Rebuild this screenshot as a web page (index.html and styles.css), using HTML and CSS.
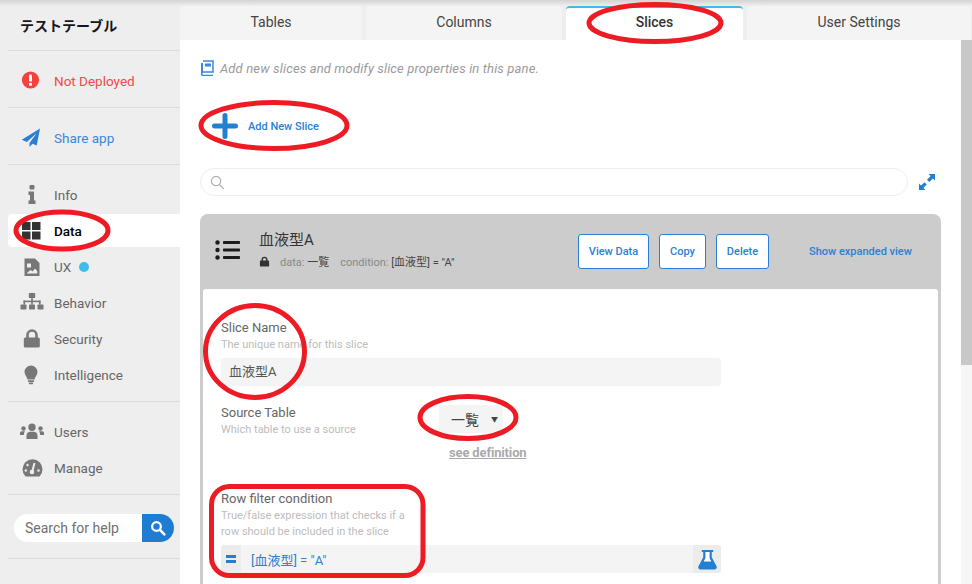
FILE: index.html
```html
<!DOCTYPE html>
<html lang="ja">
<head>
<meta charset="utf-8">
<title>テストテーブル</title>
<link rel="stylesheet" href="styles.css">
</head>
<body>
<div class="app">
  <aside class="sidebar">
    <div class="brand">テストテーブル</div>
    <div class="section section-single">
      <a class="nav-row danger"><span class="nav-icon"><svg viewBox="0 0 24 24"><circle cx="10.5" cy="11" r="8.6" fill="#f4403f"/><rect x="9" y="5.500" width="3" height="7" rx="1" fill="#fff"/><rect x="9" y="13.700" width="3" height="3" rx="1" fill="#fff"/></svg></span>Not Deployed</a>
    </div>
    <div class="section section-single">
      <a class="nav-row share"><span class="nav-icon"><svg viewBox="0 0 24 24"><path d="M20 2.500 1.800 13.800l5 2.100L16.600 7.300 9.500 17v4l3-3.300 4.200 1.700z" fill="#2a7fd3"/></svg></span>Share app</a>
    </div>
    <div class="section section-nav">
      <a class="nav-row"><span class="nav-icon"><svg viewBox="0 0 24 24" fill="#777"><rect x="9.500" y="2" width="5" height="4.500" rx="1"/><path d="M8.500 8.500h5.500v9h1.500V21h-7v-3.500H10v-5.500H8.500z"/></svg></span>Info</a>
      <a class="nav-row active"><span class="nav-icon"><svg viewBox="0 0 24 24" fill="#333"><rect x="2" y="3" width="8.500" height="8"/><rect x="12" y="3" width="8.500" height="8"/><rect x="2" y="12.500" width="8.500" height="8"/><rect x="12" y="12.500" width="8.500" height="8"/></svg></span>Data</a>
      <a class="nav-row"><span class="nav-icon"><svg viewBox="0 0 24 24"><path d="M4.500 3.500H15l4.500 4.500v13H4.500z" fill="#777"/><path d="M7 8.500h4v4H7zM7 18l3.500-3 2 1.500 2.500-3 2.200 2.500V18.500H7z" fill="#eee"/></svg></span>UX<span class="dot"></span></a>
      <a class="nav-row"><span class="nav-icon"><svg viewBox="0 0 24 24" fill="#777"><rect x="8.800" y="2" width="6.400" height="5" rx=".8"/><rect x="11.200" y="7" width="1.600" height="3.500"/><rect x="3.500" y="9.600" width="17" height="1.600"/><rect x="3.500" y="9.600" width="1.600" height="4"/><rect x="19" y="9.600" width="1.600" height="4"/><rect x="11.200" y="9.600" width="1.600" height="4"/><rect x="0.500" y="13.500" width="6" height="5" rx=".8"/><rect x="9" y="13.500" width="6" height="5" rx=".8"/><rect x="17.500" y="13.500" width="6" height="5" rx=".8"/></svg></span>Behavior</a>
      <a class="nav-row"><span class="nav-icon"><svg viewBox="0 0 24 24"><path d="M7.500 11V8a4.500 4.500 0 0 1 9 0v3" fill="none" stroke="#777" stroke-width="2.600"/><rect x="3.800" y="10.500" width="16" height="10" rx="1.500" fill="#777"/></svg></span>Security</a>
      <a class="nav-row"><span class="nav-icon"><svg viewBox="0 0 24 24" fill="#777"><path d="M11 2.500a6.500 6.500 0 0 1 6.500 6.500c0 3-2.500 4.500-3 7.500h-7c-.5-3-3-4.500-3-7.500A6.500 6.500 0 0 1 11 2.500z"/><rect x="7.800" y="17.300" width="6.400" height="1.800" rx=".8"/><rect x="8.800" y="19.500" width="4.400" height="1.800" rx=".8"/></svg></span>Intelligence</a>
    </div>
    <div class="section section-users">
      <a class="nav-row"><span class="nav-icon"><svg viewBox="0 0 24 24" fill="#777"><circle cx="12" cy="7.300" r="3.700"/><path d="M6.500 19v-3.500c0-2 1.800-3.700 3.500-3.700h4c1.700 0 3.500 1.700 3.500 3.700V19z"/><circle cx="3.500" cy="8.500" r="2.200"/><circle cx="20.500" cy="8.500" r="2.200"/><path d="M0 15v-2c0-1 .8-1.800 1.800-1.800h3.200c-.8 1-1.200 2.300-1.200 3.800zM24 15v-2c0-1-.8-1.800-1.800-1.800H19c.8 1 1.200 2.300 1.200 3.800z"/></svg></span>Users</a>
      <a class="nav-row"><span class="nav-icon"><svg viewBox="0 0 24 24"><path d="M5.500 20.500a10 10 0 1 1 14 0z" fill="#777"/><path d="m12.500 14.500 2-7.500" stroke="#eee" stroke-width="2"/><circle cx="12" cy="16" r="2.300" fill="#eee"/><circle cx="5.800" cy="14.500" r="1.200" fill="#eee"/><circle cx="7.500" cy="9" r="1.200" fill="#eee"/><circle cx="18.500" cy="14.500" r="1.200" fill="#eee"/></svg></span>Manage</a>
    </div>
    <div class="section section-search">
      <div class="help-search">
        <span class="help-text">Search for help</span>
        <span class="help-button"><svg viewBox="0 0 24 24" width="18" height="18" fill="none" stroke="#fff"><circle cx="10" cy="10" r="5.800" stroke-width="3"/><path d="m14.500 14.500 6 6" stroke-width="3.600" stroke-linecap="round"/></svg></span>
      </div>
    </div>
  </aside>

  <main class="main">
    <nav class="tabs">
      <a class="tab tab-tables">Tables</a>
      <a class="tab tab-columns">Columns</a>
      <a class="tab tab-slices active">Slices</a>
      <a class="tab tab-settings">User Settings</a>
    </nav>
    <div class="content">
      <section class="pane">
        <p class="hint"><svg viewBox="0 0 14 16" width="14" height="16"><path d="M3 1h10v11H3a1.800 1.800 0 0 0 0 3.500h10" fill="none" stroke="#3f87d6" stroke-width="1.500"/><path d="M2 3v10" stroke="#3f87d6" stroke-width="2"/><rect x="5" y="3.500" width="6" height="3" fill="#3f87d6"/></svg><em>Add new slices and modify slice properties in this pane.</em></p>
        <a class="add-slice"><svg viewBox="0 0 26 26" width="26" height="26"><path d="M13 2.500v21M2.500 13h21" stroke="#2280d3" stroke-width="5" stroke-linecap="round"/></svg><span>Add New Slice</span></a>
        <div class="search-row">
          <div class="search-box"><svg viewBox="0 0 16 16" width="15" height="15" fill="none" stroke="#aaa" stroke-width="1.200"><circle cx="6.500" cy="6.500" r="5"/><path d="m10.200 10.200 4.600 4.600"/></svg></div>
          <svg class="expand" viewBox="0 0 16 16" width="16" height="16" fill="#2280d3"><path d="M9.500 0H16v6.500l-2.100-2.100-3.600 3.600-2.300-2.300 3.600-3.600zM6.500 16H0V9.500l2.100 2.100 3.300-3.300 2.300 2.300-3.300 3.300z"/></svg>
        </div>

        <article class="card">
          <header class="card-head">
            <svg class="list-icon" viewBox="0 0 26 20" width="26" height="20" fill="#1c1c1c"><circle cx="2.500" cy="2.500" r="2.200"/><circle cx="2.500" cy="10" r="2.200"/><circle cx="2.500" cy="17.500" r="2.200"/><rect x="8" y="1" width="17" height="3" rx=".8"/><rect x="8" y="8.500" width="17" height="3" rx=".8"/><rect x="8" y="16" width="17" height="3" rx=".8"/></svg>
            <div class="card-title">
              <div class="title-text">血液型A</div>
              <div class="meta">
                <svg viewBox="0 0 12 12" width="11" height="11"><path d="M3.500 5.500V4a2.500 2.500 0 0 1 5 0v1.500" fill="none" stroke="#333" stroke-width="1.500"/><rect x="1" y="5" width="10" height="6.500" rx="1" fill="#333"/></svg>
                <span class="meta-item"><span class="muted">data:</span> 一覧</span>
                <span class="meta-item"><span class="muted">condition:</span> [血液型] = "A"</span>
              </div>
            </div>
            <div class="actions">
              <a class="btn btn-view">View Data</a>
              <a class="btn btn-copy">Copy</a>
              <a class="btn btn-delete">Delete</a>
              <a class="expanded-link">Show expanded view</a>
            </div>
          </header>
          <div class="card-body">
            <div class="field field-name">
              <div class="label">Slice Name</div>
              <div class="help">The unique name for this slice</div>
              <div class="input">血液型A</div>
            </div>
            <div class="field field-source">
              <div class="source-labels">
                <div class="label">Source Table</div>
                <div class="help">Which table to use a source</div>
              </div>
              <div class="source-control">
                <div class="select"><span>一覧</span><span class="caret">▼</span></div>
                <a class="definition">see definition</a>
              </div>
            </div>
            <div class="field field-filter">
              <div class="label">Row filter condition</div>
              <div class="help help-wrap">True/false expression that checks if a row should be included in the slice</div>
              <div class="expr">
                <span class="expr-eq"><svg viewBox="0 0 10 8" width="10" height="8" fill="#2280d3"><rect width="10" height="3"/><rect y="5" width="10" height="3"/></svg></span>
                <span class="expr-text">[血液型] = "A"</span>
                <span class="expr-test"><svg viewBox="0 0 20 22" width="19" height="21"><path d="M4 1h12v2h-1.500v5.500L19.500 18c.8 1.800-.3 3.500-2 3.500h-15c-1.700 0-2.800-1.700-2-3.500L5.500 8.500V3H4z" fill="#2280d3"/><path d="M7.800 3h4.400v6.300L14 13H6l1.800-3.700z" fill="#fff"/></svg></span>
              </div>
            </div>
          </div>
        </article>
      </section>
      <div class="scrollbar"><div class="thumb"></div></div>
    </div>
  </main>
</div>

<div class="top-shade"></div>
<svg class="marks" viewBox="0 0 972 584" width="972" height="584" fill="none" stroke="#ed1c24" stroke-width="5">
  <ellipse cx="655" cy="23" rx="66" ry="18.500"/>
  <ellipse cx="274" cy="125.500" rx="73" ry="23"/>
  <ellipse cx="62" cy="230.500" rx="46" ry="18.500"/>
  <ellipse cx="255" cy="351.500" rx="49.500" ry="46"/>
  <ellipse cx="468" cy="417.500" rx="48" ry="21"/>
  <rect x="211.500" y="486.500" width="211.500" height="89" rx="18"/>
</svg>
</body>
</html>
```
FILE: styles.css
```css
* { box-sizing: border-box; }
html, body { margin: 0; padding: 0; height: 100%; overflow: hidden; }
body { font-family: Roboto, "Noto Sans CJK JP", sans-serif; background: #fff; color: #555; position: relative; }
a { display: block; }

.app { display: flex; width: 972px; height: 584px; }

/* Sidebar */
.sidebar { width: 180px; flex: none; height: 584px; background: #eeeeee; padding-left: 8px; }
.brand { height: 51px; padding: 14px 0 0 12px; border-bottom: 1px solid #dcdcdc; font: 700 14px/22px "Noto Sans CJK JP", sans-serif; color: #161622; }
.section { display: flex; flex-direction: column; border-bottom: 1px solid #dcdcdc; }
.section-single { padding: 12px 0 8px; }
.section-nav { padding: 12px 0 8px; }
.section-users { padding: 12px 0 8px; }
.section-search { padding: 19px 6px 16px; }
.nav-row { display: flex; align-items: center; height: 33px; margin: 1px 0 2px; padding-left: 12px; font-size: 13.5px; color: #666; border-radius: 4px 0 0 4px; }
.nav-row.active { background: #fff; color: #000; font-weight: 500; }
.nav-row.danger { color: #f4484a; }
.nav-row.share { color: #3a87d8; }
.nav-icon { width: 24px; height: 24px; margin-right: 10px; flex: none; }
.nav-icon svg { display: block; width: 24px; height: 24px; }
.dot { width: 10px; height: 10px; margin-left: 8px; border-radius: 50%; background: #3fbcec; }
.help-search { display: flex; height: 28px; width: 160px; border-radius: 14px; background: #fff; overflow: hidden; }
.help-text { flex: 1; padding-left: 11px; font-size: 14px; line-height: 28px; color: #707070; }
.help-button { width: 32px; display: flex; align-items: center; justify-content: center; background: #1f7dd1; }

/* Tabs */
.main { flex: 1; min-width: 0; display: flex; flex-direction: column; }
.tabs { display: flex; height: 40px; padding-top: 6px; background: #eeeeee; }
.tab { height: 34px; background: #f4f4f4; border-radius: 4px 4px 0 0; text-align: center; font-size: 14px; line-height: 32px; color: #444; }
.tab-tables { width: 182px; margin-right: 4px; }
.tab-columns { width: 196px; margin-right: 4px; }
.tab-slices { width: 177px; margin-right: 4px; }
.tab-settings { width: 224px; }
.tab.active { background: #fff; border-top: 2px solid #3fbcec; line-height: 28px; font-weight: 500; color: #333; }

/* Pane */
.content { flex: 1; min-height: 0; display: flex; }
.pane { flex: 1; min-width: 0; padding: 0 20px; overflow: hidden; }
.scrollbar { width: 11px; flex: none; background: #f6f6f6; }
.thumb { height: 325px; background: #c8c8c8; }
.hint { display: flex; align-items: center; gap: 6px; height: 16px; margin: 20px 0 0; font-size: 13px; color: #9a9a9a; }
.hint em { letter-spacing: .14px; }
.add-slice { display: flex; align-items: center; height: 26px; margin: 37px 0 0 12px; color: #2a7fd3; font-size: 11px; font-weight: 500; }
.add-slice span { margin-left: 10px; }
.search-row { display: flex; align-items: center; margin-top: 29px; }
.search-box { flex: none; width: 708px; height: 28px; border: 1px solid #eeeeee; border-radius: 14px; display: flex; align-items: center; padding-left: 9px; }
.expand { margin-left: 11px; }

/* Card */
.card { margin-top: 18px; background: #cccccc; border-radius: 8px 8px 0 0; padding: 0 3px; }
.card-head { display: flex; height: 75px; }
.list-icon { flex: none; margin: 26px 0 0 12px; }
.card-title { width: 319px; margin-left: 18px; padding-top: 17px; flex: none; }
.title-text { font-size: 15px; line-height: 18px; color: #333; }
.meta { display: flex; align-items: center; height: 16px; margin-top: 4px; font-size: 11px; color: #444; }
.meta-item { margin-left: 10px; white-space: nowrap; }
.meta-item + .meta-item { margin-left: 11px; }
.muted { color: #888; }
.actions { display: flex; align-items: flex-start; padding-top: 20px; }
.btn { height: 35px; background: #fff; border: 1px solid #2a7fd3; border-radius: 3px; color: #2a7fd3; font-size: 11px; font-weight: 500; line-height: 33px; text-align: center; }
.btn-view { width: 71px; margin-right: 10px; }
.btn-copy { width: 47px; margin-right: 10px; }
.btn-delete { width: 53px; margin-right: 40px; }
.expanded-link { color: #2a7fd3; font-size: 11px; font-weight: 500; line-height: 35px; white-space: nowrap; }
.card-body { background: #fff; border-radius: 3px 3px 0 0; height: 300px; padding: 31px 0 0 18px; }
.field { width: 500px; }
.label { font-size: 13px; line-height: 16px; color: #666; }
.help { font-size: 11px; line-height: 16px; margin-top: 1px; color: #bcbcbc; }
.help-wrap { width: 190px; }
.input { height: 28px; margin-top: 5px; padding-left: 8px; background: #f4f4f4; border-radius: 3px; font-size: 13px; line-height: 28px; color: #555; }
.field-source { display: flex; margin-top: 19px; }
.source-labels { width: 218px; flex: none; }
.select { display: flex; align-items: center; width: 64px; height: 28px; padding-left: 12px; background: #f4f4f4; font-size: 14px; color: #444; }
.caret { margin-left: 12px; font-size: 7px; color: #444; }
.definition { margin: 12px 0 0 10px; font-size: 13px; line-height: 16px; font-weight: 700; color: #aaaaaa; text-decoration: underline; letter-spacing: -.15px; }
.field-filter { margin-top: 30px; }
.expr { display: flex; align-items: center; height: 28px; margin-top: 5px; background: #f4f4f4; border-radius: 3px; overflow: hidden; }
.expr-eq { width: 20px; height: 28px; background: #ececec; display: flex; align-items: center; justify-content: center; flex: none; }
.expr-text { flex: 1; padding-left: 10px; font-size: 13px; color: #2a7fd3; }
.expr-test { width: 28px; height: 28px; background: #ececec; display: flex; align-items: center; justify-content: center; flex: none; }

/* Overlays: window shade and hand-drawn annotations */
.top-shade { position: absolute; left: 0; top: 0; width: 972px; height: 6px; background: linear-gradient(#d4d4d4, rgba(238, 238, 238, 0)); }
.marks { position: absolute; left: 0; top: 0; pointer-events: none; }
```
